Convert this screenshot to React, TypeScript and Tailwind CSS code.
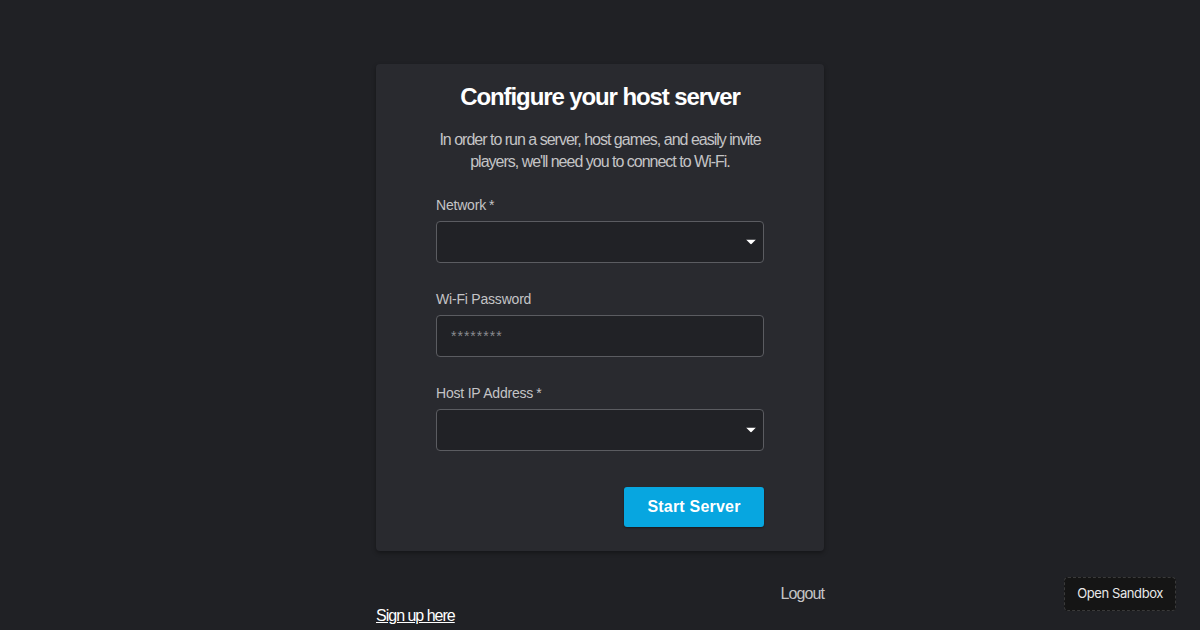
import React, { useState } from "react";

const Caret = () => (
  <svg width="10" height="5" viewBox="0 0 10 5" className="pointer-events-none absolute right-[8px] top-1/2 -translate-y-1/2">
    <path d="M0 0 L10 0 L5 5 Z" fill="#ffffff" />
  </svg>
);

const Field = ({ label, required, children }: { label: string; required?: boolean; children: React.ReactNode }) => (
  <div className="flex flex-col">
    <label className="text-[14px] leading-[20px] text-[#c4c4c6] tracking-[-0.2px] mb-[6px]">
      {label}
      {required && <span className="ml-[3px]">*</span>}
    </label>
    {children}
  </div>
);

export default function App() {
  const [network, setNetwork] = useState("");
  const [password, setPassword] = useState("");
  const [hostIp, setHostIp] = useState("");

  return (
    <div
      className="relative min-h-screen w-full bg-[#202125] flex flex-col items-center pt-[64px]"
      style={{ fontFamily: '"Liberation Sans", Arial, sans-serif' }}
    >
      <div className="w-[448px] rounded-[4px] bg-[#292a2f] shadow-[0_2px_4px_rgba(0,0,0,0.35)] px-[60px] pt-[17px] pb-[24px]">
        <h1 className="text-center text-[24px] leading-[32px] font-bold text-white tracking-[-1.1px]">
          Configure your host server
        </h1>
        <p className="mt-[16px] text-center text-[16px] leading-[22px] text-[#c4c4c6] tracking-[-1px]">
          In order to run a server, host games, and easily invite players, we'll need you to connect to Wi-Fi.
        </p>

        <form className="mt-[22px] flex flex-col gap-[26px]" onSubmit={(e) => e.preventDefault()}>
          <Field label="Network" required>
            <div className="relative">
              <select
                value={network}
                onChange={(e) => setNetwork(e.target.value)}
                className="appearance-none h-[42px] w-full rounded-[4px] border border-[#5b5c61] bg-[#212226] px-[14px] text-[14px] text-white outline-none"
              >
                <option value=""></option>
              </select>
              <Caret />
            </div>
          </Field>

          <Field label="Wi-Fi Password">
            <input
              type="password"
              value={password}
              onChange={(e) => setPassword(e.target.value)}
              placeholder="********"
              className="h-[42px] w-full rounded-[4px] border border-[#5b5c61] bg-[#212226] px-[14px] text-[14px] text-white outline-none placeholder:text-[#8a8b90] placeholder:tracking-[1px]"
            />
          </Field>

          <Field label="Host IP Address" required>
            <div className="relative">
              <select
                value={hostIp}
                onChange={(e) => setHostIp(e.target.value)}
                className="appearance-none h-[42px] w-full rounded-[4px] border border-[#5b5c61] bg-[#212226] px-[14px] text-[14px] text-white outline-none"
              >
                <option value=""></option>
              </select>
              <Caret />
            </div>
          </Field>

          <div className="flex justify-end mt-[10px]">
            <button
              type="submit"
              className="h-[40px] w-[140px] rounded-[3px] bg-[#07a6e0] text-[16px] font-bold text-white tracking-[0.2px] shadow-[0_1px_2px_rgba(0,0,0,0.4)]"
            >
              Start Server
            </button>
          </div>
        </form>
      </div>

      <div className="w-[448px] mt-[32px] flex flex-col">
        <a href="#" className="self-end text-[16px] leading-[22px] text-[#c4c4c6] tracking-[-0.9px]">
          Logout
        </a>
        <a href="#" className="self-start text-[16px] leading-[22px] text-white underline tracking-[-1px]">
          Sign up here
        </a>
      </div>

      <button
        className="absolute right-[24px] bottom-[19px] h-[34px] px-[12px] rounded-[4px] bg-[#151515] border border-dashed border-[#3a3a3a] text-[13px] tracking-[-0.4px] text-[#e8e8e8]"
        style={{ fontFamily: '"Inter", "Liberation Sans", sans-serif' }}
      >
        Open Sandbox
      </button>
    </div>
  );
}
